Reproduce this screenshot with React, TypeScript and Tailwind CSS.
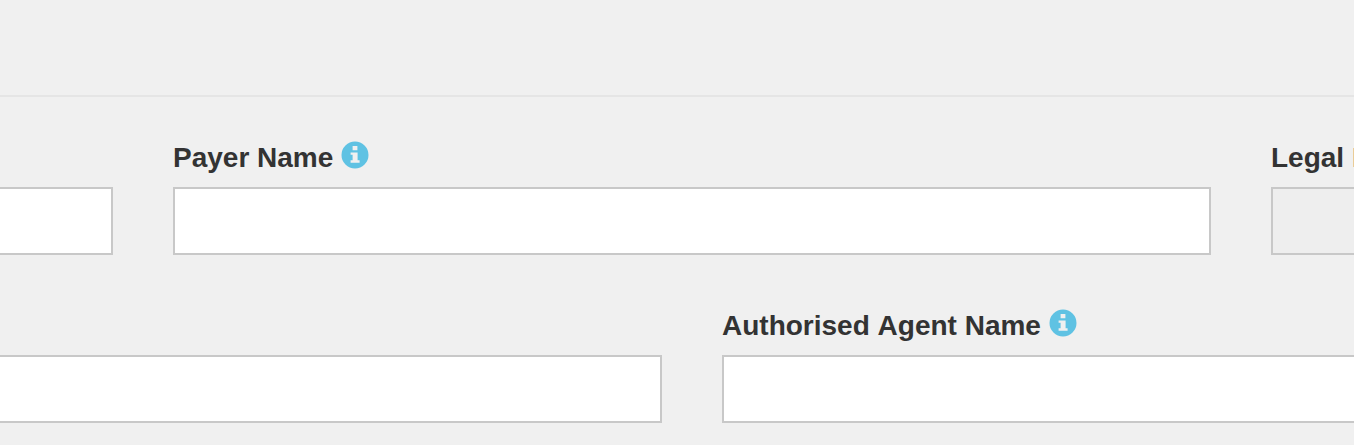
import React from "react";

function InfoIcon() {
  return (
    <svg viewBox="0 0 28 28" className="relative top-[-3px] h-[28px] w-[28px] shrink-0" aria-hidden="true">
      <path
        fill="#5fc2e3"
        fillRule="evenodd"
        d="M14 0.5a13.5 13.5 0 1 1 0 27a13.5 13.5 0 0 1 0-27ZM11.6 5v4.2h4.8V5ZM9.6 11.4v2.4h2v5.4h-2v2.5h9v-2.5h-2V11.4Z"
      />
    </svg>
  );
}

function Field({ label, icon, width, disabled }: { label?: string; icon?: boolean; width: string; disabled?: boolean }) {
  return (
    <div className={`${width} shrink-0`}>
      <div className="flex h-[32px] items-center gap-[8px] whitespace-nowrap pt-[2px] text-[28px] font-bold leading-[32px] text-[#333333] [font-kerning:none]">
        {label && <span>{label}</span>}
        {icon && <InfoIcon />}
      </div>
      <div className={`mt-[14px] h-[68px] border-2 border-[#c8c8c8] ${disabled ? "bg-[#eeeeee]" : "bg-white"}`} />
    </div>
  );
}

export default function App() {
  return (
    <div className="h-[445px] w-[1354px] overflow-hidden bg-[#f0f0f0] font-['Liberation_Sans',Arial,sans-serif]">
      <div className="h-[95px]" />
      <div className="h-[2px] bg-[#e5e5e5]" />
      <div className="mt-[44px] ml-[-200px] flex gap-[60px]">
        <Field width="w-[313px]" />
        <Field width="w-[1038px]" label="Payer Name" icon />
        <Field width="w-[400px]" label="Legal Name" disabled />
      </div>
      <div className="mt-[54px] ml-[-300px] flex gap-[60px]">
        <Field width="w-[962px]" />
        <Field width="w-[900px]" label="Authorised Agent Name" icon />
      </div>
    </div>
  );
}
